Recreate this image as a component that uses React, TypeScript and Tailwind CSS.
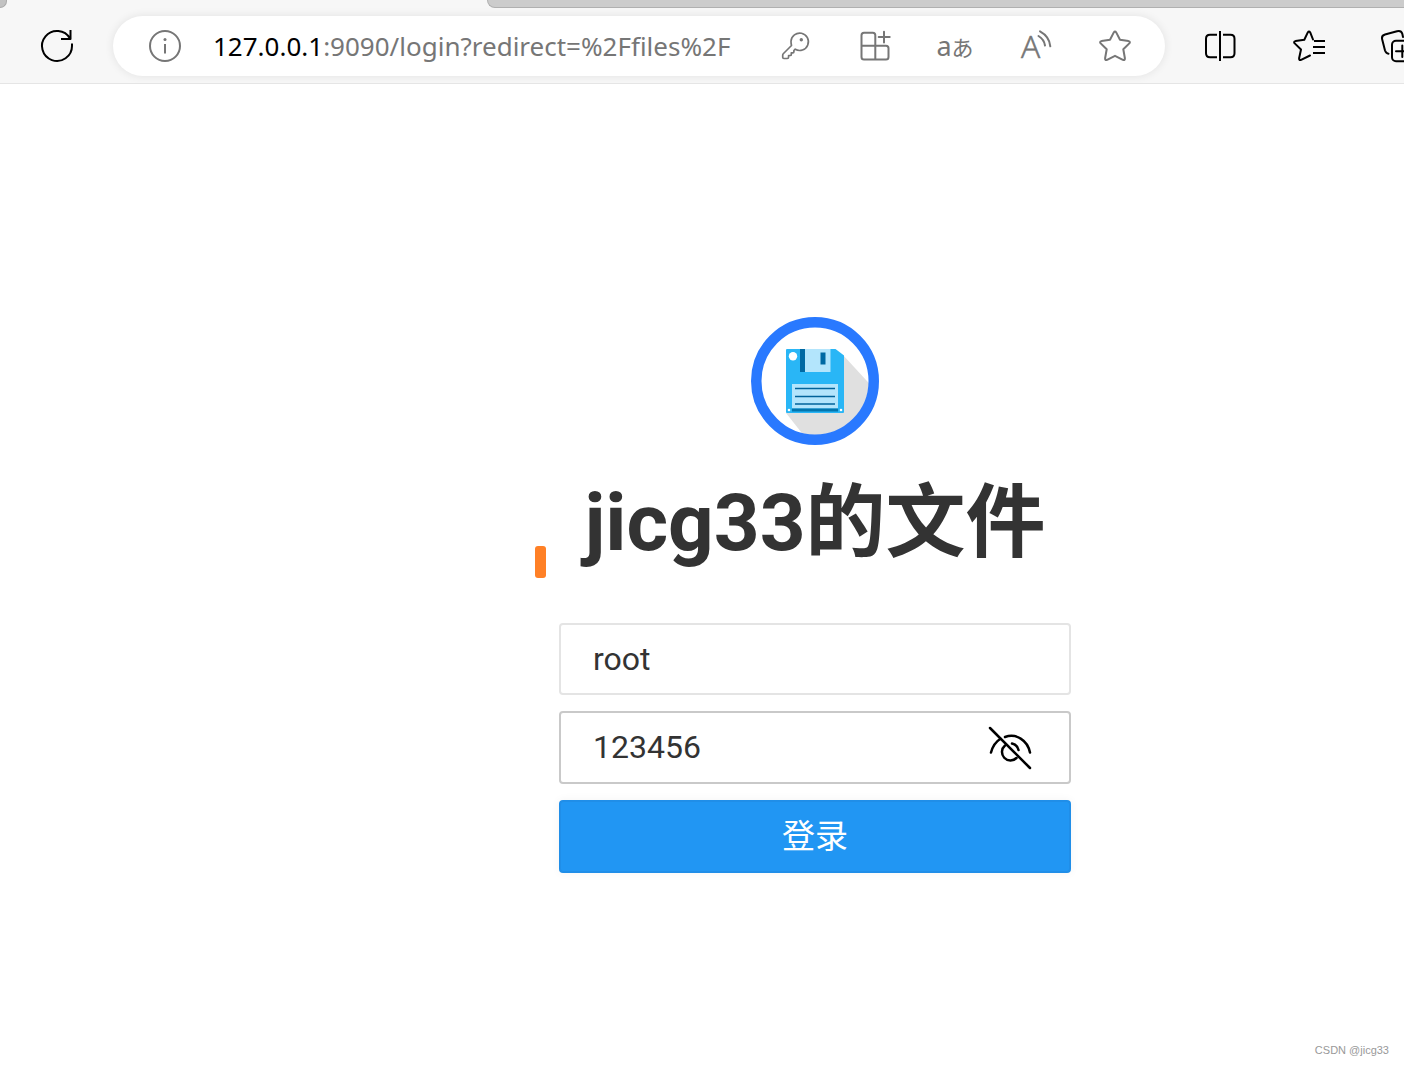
import React from "react";

type IconProps = { size?: number; children: React.ReactNode };

function Icon({ size = 32, children }: IconProps) {
  return (
    <svg
      width={size}
      height={size}
      viewBox={`0 0 ${size} ${size}`}
      fill="none"
      stroke="currentColor"
      strokeWidth="2"
      strokeLinecap="round"
      strokeLinejoin="round"
      aria-hidden="true"
      className="block shrink-0 overflow-visible"
    >
      {children}
    </svg>
  );
}

function IconButton({ label, children }: { label: string; children: React.ReactNode }) {
  return (
    <button type="button" aria-label={label} className="shrink-0">
      {children}
    </button>
  );
}

function AddressBar() {
  return (
    <div className="flex h-15 min-w-0 flex-1 items-center rounded-full bg-white pr-[34px] pl-9 text-[#767676] shadow-[0_0_10px_rgba(0,0,0,0.09)]">
      <IconButton label="Site information">
        <Icon>
          <circle cx="16" cy="16" r="15" />
          <path d="M16 14v9.500" strokeLinecap="butt" />
          <circle cx="16" cy="9.500" r="1.500" fill="currentColor" stroke="none" />
        </Icon>
      </IconButton>
      <div
        role="textbox"
        aria-label="Address"
        className="ml-8 min-w-0 flex-1 overflow-hidden font-['Noto_Sans',sans-serif] text-[26px] leading-9 whitespace-nowrap"
      >
        <span className="text-black">127.0.0.1</span>:9090/login?redirect=%2Ffiles%2F
      </div>
      <div className="flex shrink-0 items-center gap-12">
        <IconButton label="Saved passwords">
          <Icon>
            <path
              d="M12.500 15.500 4.500 23.500q-.8.800-.8 1.800v2q0 1.200 1.200 1.200h3.300q1.400 0 1.400-1.400v-1.600h1.700q1 0 1-1v-1.700h1.600q1 0 1-1v-1.300l1.300-1.300A8.700 8.700 0 1 0 12 11.300q0 2.300.5 4.200Z"
              strokeWidth="1.700"
            />
            <circle cx="22.300" cy="9.700" r="1.700" fill="currentColor" stroke="none" />
          </Icon>
        </IconButton>
        <IconButton label="App available">
          <Icon>
            <path d="M16.300 15.700V5.200q0-2.500-2.500-2.500H5q-2.500 0-2.500 2.500v21.800q0 2.500 2.500 2.500h22q2.500 0 2.500-2.500v-8.800q0-2.500-2.500-2.500H2.500M16.300 15.700v13.800M25 1.700v10.800M19.700 7h11" />
          </Icon>
        </IconButton>
        <button
          type="button"
          aria-label="Translate"
          className="flex w-8 shrink-0 items-baseline justify-center leading-8"
        >
          <span className="font-['Noto_Sans',sans-serif] text-[27px]">a</span>
          <span className="font-['Noto_Sans_CJK_JP',sans-serif] text-[22px]">あ</span>
        </button>
        <IconButton label="Read aloud">
          <Icon>
            <text
              x="2"
              y="28"
              fontSize="32"
              fontWeight="300"
              fill="currentColor"
              stroke="currentColor"
              strokeWidth="0.600"
              className="font-['Open_Sans',sans-serif]"
            >
              A
            </text>
            <path d="M19.500 6q5.500 3.200 6.500 9.500M21 1.300q9.500 5.200 10.300 15" />
          </Icon>
        </IconButton>
        <IconButton label="Add to favorites">
          <Icon>
            <path d="M14.800 2.400q1.200-2 2.400 0L21 9.700l8.500 1.400q2.300.6.800 2.300L24.300 19.300l1.600 9q.1 2.300-2 1.500L16 25.800l-7.900 4q-2.100.8-2-1.500l1.600-9L1.700 13.400q-1.500-1.700.8-2.300L11 9.700Z" />
          </Icon>
        </IconButton>
      </div>
    </div>
  );
}

function TabStrip() {
  return (
    <div className="flex h-2 justify-between">
      <div className="w-[7px] rounded-br-lg border-r border-b border-[#aaa] bg-[#c2c2c2]" />
      <div className="ml-[480px] flex-1 rounded-bl-lg border-b border-l border-[#b0b0b0] bg-[#ccc]" />
    </div>
  );
}

function BrowserChrome() {
  return (
    <header className="overflow-hidden border-b border-[#e5e5e5] bg-[#f7f7f7]">
      <TabStrip />
      <div className="flex items-center pt-2 pb-[7px] pl-10 text-black">
        <div className="mr-[39px] flex shrink-0">
          <IconButton label="Refresh">
            <Icon size={34}>
              <path d="M32 15.500V17A15 15 0 1 1 30 9.500M30.500 2V10H22" strokeLinecap="square" />
            </Icon>
          </IconButton>
        </div>
        <AddressBar />
        <div className="flex w-[239px] shrink-0 gap-14 pl-10">
          <IconButton label="Split screen">
            <Icon>
              <path d="M12 4.700H5q-4 0-4 4v14.600q0 4 4 4h7M18 4.700h7.500q4 0 4 4v14.600q0 4-4 4H18M15 1v30" strokeLinecap="butt" />
            </Icon>
          </IconButton>
          <IconButton label="Favorites">
            <Icon>
              <path d="M20 9.500 17.200 2.400q-1.200-2-2.400 0L11.300 9.700l-8.800 1.400q-2.300.6-.8 2.300L8 19.500l-1.900 8.800q-.1 2.300 2 1.500L17 25.500" />
              <path d="M21 11h11M20 17h12M20 23h12" strokeLinecap="butt" />
            </Icon>
          </IconButton>
          <IconButton label="Collections">
            <Icon>
              <path d="M7.500 23.700q-2.500-.2-3.500-3.200L1.200 9.500q-1-4 2.800-5L16 1.200q4.200-1 5.300 2.500l.7 3.300" />
              <rect x="11" y="10.700" width="20" height="20.500" rx="4" />
              <path d="M21.300 15.500v11.500M15 21.200h12" />
            </Icon>
          </IconButton>
        </div>
      </div>
    </header>
  );
}

function FloppyLogo() {
  return (
    <svg width="128" height="128" viewBox="0 0 128 128" role="img" aria-label="File Browser" className="block">
      <defs>
        <clipPath id="disc">
          <circle cx="64" cy="64" r="54" />
        </clipPath>
      </defs>
      <path d="M92 38l60 65v70H96L35 96Z" fill="#e0e0e0" clipPath="url(#disc)" />
      <circle cx="64" cy="64" r="58.750" fill="none" stroke="#2979ff" strokeWidth="10.500" />
      <path d="M36 32H84.500L93 38.500V95q0 1-1 1H36q-1 0-1-1V33q0-1 1-1Z" fill="#29b6f6" />
      <path d="M49 32h5v23h-5z" fill="#0069a3" />
      <path d="M54 32h25.500v23H54z" fill="#b3e5fc" />
      <path d="M69.500 35.500h5v12h-5z" fill="#0069a3" />
      <circle cx="42" cy="39.300" r="4.200" fill="#fff" />
      <path d="M41 67h46v24.500H41z" fill="#b3e5fc" />
      <path d="M44 71.500h40M44 79.500h40M44 87h40" stroke="#01639a" strokeWidth="1.500" />
      <path d="M41 91.500h46v3H41z" fill="#0275ad" />
      <circle cx="38" cy="93" r="1.300" fill="#fff" />
      <circle cx="90" cy="93" r="1.300" fill="#fff" />
    </svg>
  );
}

function LoginForm() {
  return (
    <form className="flex w-full max-w-lg flex-col items-center" onSubmit={(e) => e.preventDefault()}>
      <FloppyLogo />
      <div className="relative mt-6 mb-[45px] w-full text-center">
        <h1 className="text-[80px] leading-[109px] font-bold whitespace-nowrap">jicg33的文件</h1>
        <span className="absolute bottom-0 -left-6 h-8 w-[11px] rounded-[3px] bg-[#ff8026]" />
      </div>
      <div className="flex w-full flex-col gap-4 text-[32px]">
        <input
          aria-label="用户名"
          defaultValue="root"
          className="h-[72px] w-full rounded-[4px] border-2 border-[#e4e4e4] bg-white px-8 outline-none"
        />
        <div className="relative">
          <input
            aria-label="密码"
            defaultValue="123456"
            className="block h-[73px] w-full rounded-[4px] border-2 border-[#c9c9c9] bg-white pr-24 pb-0.5 pl-8 outline-none"
          />
          <button type="button" aria-label="隐藏密码" className="absolute inset-y-0 right-[39px] text-black">
            <Icon size={44}>
              <g strokeWidth="2.500">
                <path d="M2 2 42 42" />
                <path d="M3 26.500Q5.500 17 12.500 12.700M17 11C28 7 39.500 14 42 26.500" />
                <path d="M17 19.500A8.500 8.500 0 1 0 28.500 32M24 17.500A8.500 8.500 0 0 1 30.500 24" />
              </g>
            </Icon>
          </button>
        </div>
        <button
          type="submit"
          className="h-[73px] w-full rounded-[4px] border-2 border-[#208ee8] bg-[#2196f3] text-[33px] text-white shadow-[0_0_10px_rgba(0,0,0,0.05)]"
        >
          登录
        </button>
      </div>
    </form>
  );
}

export default function App() {
  return (
    <div className="flex min-h-screen flex-col overflow-x-hidden bg-white font-['Roboto','Noto_Sans_CJK_SC',sans-serif] text-[#333]">
      <BrowserChrome />
      <main className="flex flex-1 justify-center pt-[233px] pl-[226px]">
        <LoginForm />
      </main>
      <footer className="pr-[15px] pb-2 text-right font-['Liberation_Sans',sans-serif] text-[11px] leading-4 text-[#999]">
        CSDN @jicg33
      </footer>
    </div>
  );
}
